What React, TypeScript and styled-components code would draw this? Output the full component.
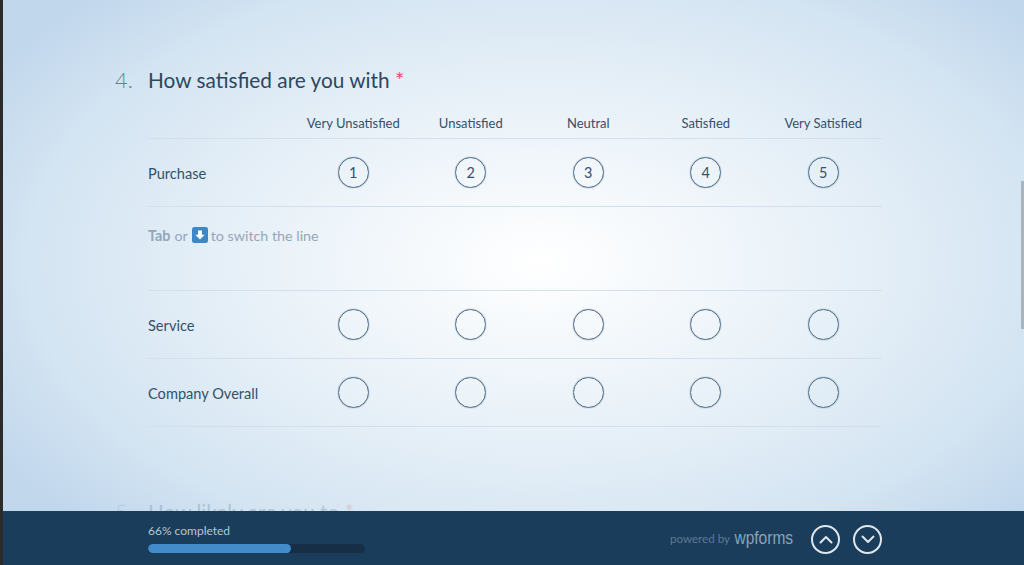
import React from 'react';
import styled, { createGlobalStyle } from 'styled-components';

const columns = ['Very Unsatisfied', 'Unsatisfied', 'Neutral', 'Satisfied', 'Very Satisfied'];

export default function App() {
  return (
    <Page>
      <GlobalStyle />
      <Content>
        <Question>
          <QuestionNumber>4.</QuestionNumber>
          <QuestionTitle>
            How satisfied are you with <Required>*</Required>
          </QuestionTitle>
        </Question>
        <Table>
          <HeaderRow>
            <span />
            {columns.map(c => (
              <HeaderCell key={c}>{c}</HeaderCell>
            ))}
          </HeaderRow>
          <Row>
            <RowLabel>Purchase</RowLabel>
            {columns.map((c, i) => (
              <Cell key={c}>
                <Choice>{i + 1}</Choice>
              </Cell>
            ))}
          </Row>
          <Hint>
            <b>Tab</b> or
            <KeyIcon viewBox="0 0 16 16">
              <rect width="16" height="16" rx="2.5" fill="#3d87c9" />
              <path d="M6 3.5h4v4.2h2.6L8 12.6 3.4 7.7H6z" fill="#fff" />
            </KeyIcon>
            to switch the line
          </Hint>
          <Row>
            <RowLabel>Service</RowLabel>
            {columns.map(c => (
              <Cell key={c}>
                <Choice />
              </Cell>
            ))}
          </Row>
          <Row>
            <RowLabel>Company Overall</RowLabel>
            {columns.map(c => (
              <Cell key={c}>
                <Choice />
              </Cell>
            ))}
          </Row>
        </Table>
        <NextQuestion>
          <QuestionNumber>5.</QuestionNumber>
          <QuestionTitle>
            How likely are you to <Required>*</Required>
          </QuestionTitle>
        </NextQuestion>
        <ScrollThumb />
      </Content>
      <Footer>
        <Progress>
          <ProgressLabel>66% completed</ProgressLabel>
          <ProgressTrack>
            <ProgressFill style={{ width: '66%' }} />
          </ProgressTrack>
        </Progress>
        <PoweredBy>
          powered by <Brand>wpforms</Brand>
        </PoweredBy>
        <NavButtons>
          <NavButton>
            <svg width="14" height="9" viewBox="0 0 14 9" fill="none">
              <path d="M1.5 7.5 7 2l5.5 5.5" stroke="#dfe6ec" strokeWidth="2" strokeLinecap="round" strokeLinejoin="round" />
            </svg>
          </NavButton>
          <NavButton>
            <svg width="14" height="9" viewBox="0 0 14 9" fill="none">
              <path d="M1.5 1.5 7 7l5.5-5.5" stroke="#dfe6ec" strokeWidth="2" strokeLinecap="round" strokeLinejoin="round" />
            </svg>
          </NavButton>
        </NavButtons>
      </Footer>
    </Page>
  );
}

const GlobalStyle = createGlobalStyle`
  html, body {
    margin: 0;
    height: 100%;
    overflow: hidden;
  }
  body {
    font-family: Lato, "Liberation Sans", sans-serif;
  }
`;

const Page = styled.div`
  box-sizing: border-box;
  display: flex;
  flex-direction: column;
  height: 100vh;
  border-left: 3px solid #2b2b2b;
  overflow: hidden;
  background: radial-gradient(ellipse 640px 370px at 537px 262px, #ffffff 0%, #e8f1f8 45%, #d3e4f2 80%, #c1d7ec 100%);
`;

const Content = styled.div`
  position: relative;
  flex: 1;
  min-height: 0;
  overflow: hidden;
  padding: 65px 139px 0 112px;
`;

const Question = styled.div`
  display: flex;
  align-items: baseline;
  height: 30px;
  line-height: 30px;
  font-size: 22px;
`;

const QuestionNumber = styled.span`
  width: 33px;
  color: #6f7f8e;
  font-weight: 300;
`;

const QuestionTitle = styled.span`
  color: #2d4760;
  font-size: 20.8px;
`;

const Required = styled.span`
  color: #e0506e;
  font-size: 22px;
`;

const Table = styled.div`
  width: 734px;
  margin: 15px 0 0 33px;
`;

const rowGrid = `
  display: grid;
  grid-template-columns: 146.5px repeat(5, 117.5px);
  align-items: center;
`;

const HeaderRow = styled.div`
  ${rowGrid}
  height: 26px;
  padding-bottom: 2px;
  border-bottom: 1px solid #d3dfea;
`;

const HeaderCell = styled.span`
  text-align: center;
  font-size: 13px;
  color: #34506b;
`;

const Row = styled.div`
  ${rowGrid}
  height: 67px;
  border-bottom: 1px solid #d3dfea;
`;

const RowLabel = styled.span`
  padding-top: 2px;
  font-size: 14.6px;
  color: #34506b;
`;

const Cell = styled.div`
  display: flex;
  justify-content: center;
`;

const Choice = styled.div`
  box-sizing: border-box;
  display: flex;
  align-items: center;
  justify-content: center;
  width: 31px;
  height: 31px;
  border: 1px solid #4f6d8c;
  border-radius: 50%;
  box-shadow: 0 0 1px #4f6d8c;
  font-size: 14.4px;
  color: #34506b;
`;

const Hint = styled.div`
  box-sizing: border-box;
  display: flex;
  align-items: center;
  gap: 4px;
  height: 84px;
  padding-bottom: 27px;
  border-bottom: 1px solid #d3dfea;
  font-size: 14.3px;
  color: #95a6b8;

  b {
    font-weight: 700;
  }
`;

const KeyIcon = styled.svg`
  width: 16px;
  height: 16px;
  margin-right: -1px;
`;

const NextQuestion = styled(Question)`
  margin-top: 70px;
  opacity: 0.2;
`;

const ScrollThumb = styled.div`
  position: absolute;
  top: 181px;
  right: 0;
  width: 3px;
  height: 148px;
  background: #a9b4bf;
`;

const Footer = styled.div`
  display: flex;
  align-items: center;
  flex: 0 0 54px;
  padding: 0 142px 0 145px;
  background: #1b3d5c;
`;

const Progress = styled.div`
  display: flex;
  flex-direction: column;
  width: 217px;
  gap: 6px;
`;

const ProgressLabel = styled.span`
  font-size: 12px;
  line-height: 15px;
  color: #b7c5d2;
`;

const ProgressTrack = styled.div`
  height: 9px;
  border-radius: 5px;
  background: #162f47;
  overflow: hidden;
`;

const ProgressFill = styled.div`
  height: 100%;
  border-radius: 5px;
  background: #438ccb;
`;

const PoweredBy = styled.div`
  display: flex;
  align-items: center;
  margin-left: auto;
  font-size: 11.6px;
  color: #5d7993;
`;

const Brand = styled.span`
  display: inline-block;
  margin-left: -5px;
  font-family: "Liberation Sans", sans-serif;
  font-size: 18px;
  color: #8ea2b5;
  transform: scaleX(0.86);
  transform-origin: right center;
`;

const NavButtons = styled.div`
  display: flex;
  gap: 13px;
  margin: 2px 0 0 18px;
`;

const NavButton = styled.div`
  box-sizing: border-box;
  display: flex;
  align-items: center;
  justify-content: center;
  width: 29px;
  height: 29px;
  border: 2px solid #dfe6ec;
  border-radius: 50%;
`;
